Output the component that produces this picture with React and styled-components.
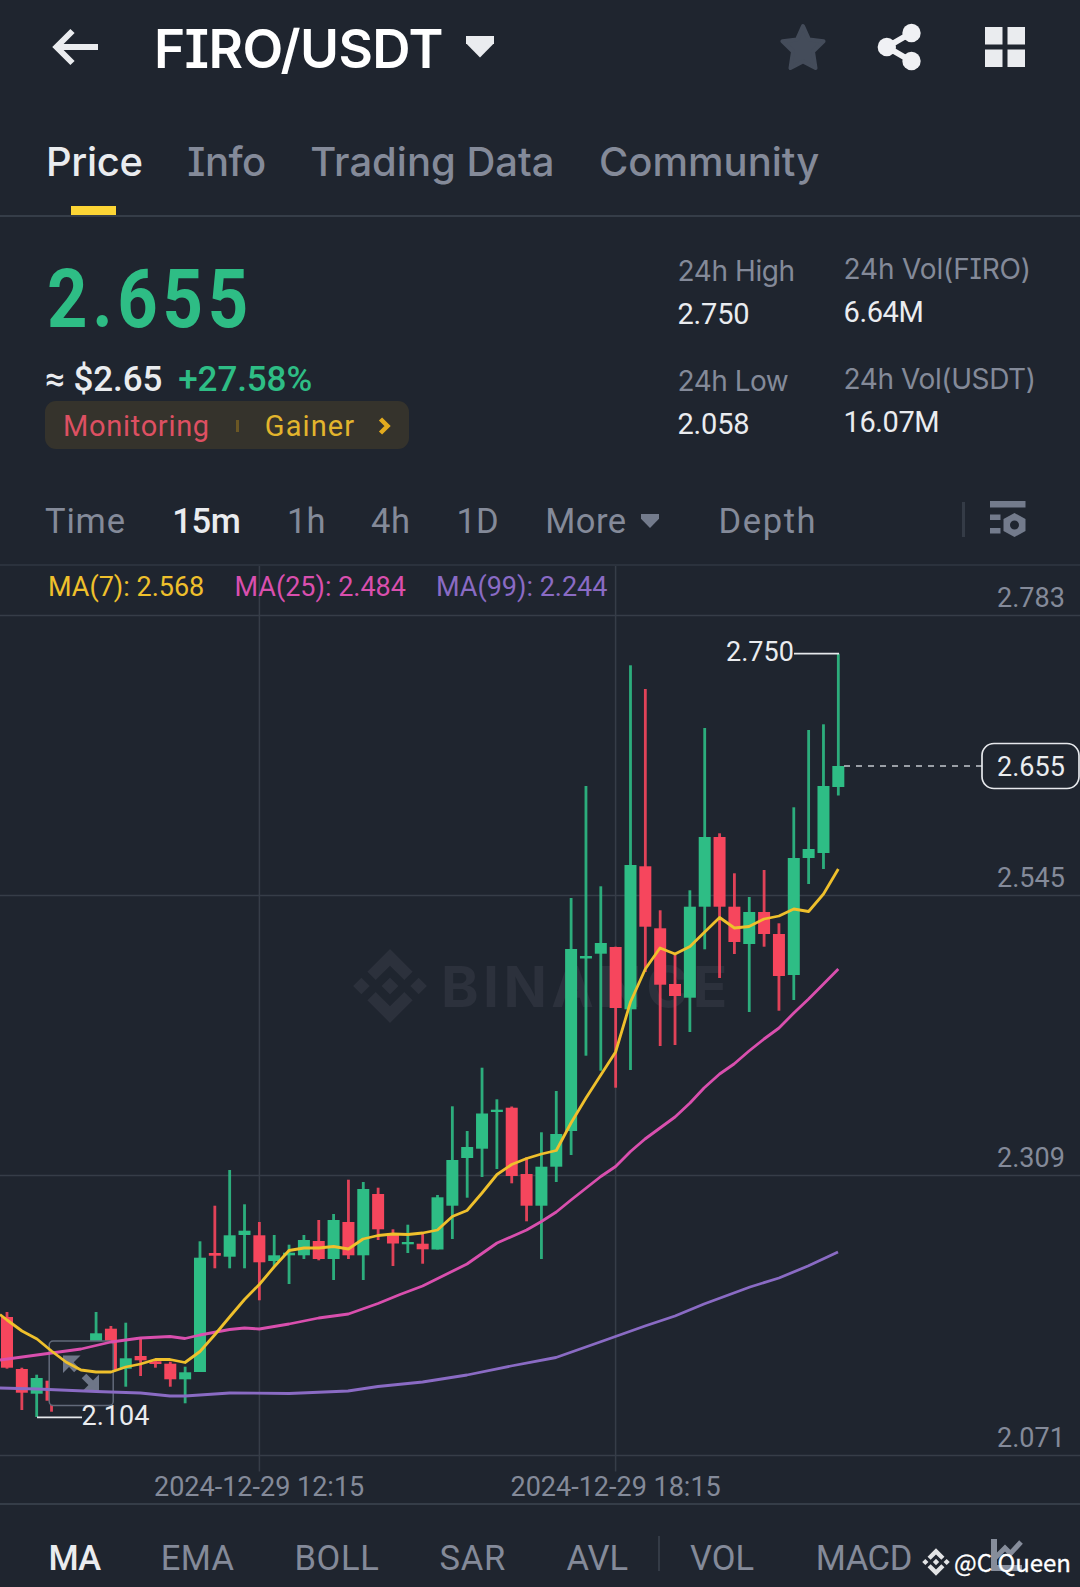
import React from "react";
import styled, { createGlobalStyle } from "styled-components";

const c = {
  bg: "#1f252f",
  text: "#eaecef",
  muted: "#848a99",
  line: "#353d48",
  grid: "#363d48",
  green: "#2ebd85",
  red: "#f6465d",
  yellow: "#efc02c",
  pink: "#d94fae",
  purple: "#8a6bc4",
};

const GlobalStyle = createGlobalStyle`
  body {
    margin: 0;
    background: ${c.bg};
    color: ${c.text};
    font-family: Roboto, "Liberation Sans", sans-serif;
  }
`;

const Screen = styled.main`
  position: relative;
  width: 1080px;
  height: 1587px;
  overflow: hidden;
  display: flex;
  flex-direction: column;
`;

/* ---------- header ---------- */
const Header = styled.header`
  height: 94px;
  box-sizing: border-box;
  padding: 0 55px 0 52px;
  display: flex;
  align-items: center;
`;

const Pair = styled.h1`
  margin: 4px 23px 0 56px;
  font: 600 53px/60px Inter, sans-serif;
  font-feature-settings: "cv08";
  letter-spacing: -0.6px;
  color: #fff;
`;

const Actions = styled.div`
  margin-left: auto;
  display: flex;
  align-items: center;
`;

const IconBox = styled.svg`
  display: block;
  flex: none;
  margin-left: ${(p) => p.$ml || 0}px;
`;

/* ---------- section tabs ---------- */
const Tabs = styled.nav`
  height: 78px;
  padding: 43px 0 0 46px;
  display: flex;
  gap: 44.5px;
  border-bottom: 2px solid ${c.line};
`;

const Tab = styled.div`
  display: flex;
  flex-direction: column;
  align-items: center;
  justify-content: space-between;
  font: 500 40px/50px Inter, sans-serif;
  font-feature-settings: "cv08";
  letter-spacing: ${(p) => p.$ls || 0}px;
  color: ${(p) => (p.$active ? c.text : c.muted)};

  &::after {
    content: "";
    width: 45px;
    height: 9px;
    margin-right: 1px;
    background: ${(p) => (p.$active ? "#fcd535" : "transparent")};
  }
`;

/* ---------- price summary ---------- */
const Summary = styled.section`
  height: 261px;
  display: flex;
`;

const Quote = styled.div`
  flex: none;
  width: 677.5px;
  padding: 37px 0 0 45px;
  box-sizing: border-box;
`;

const LastPrice = styled.div`
  width: max-content;
  margin-left: 2px;
  font-size: 82px;
  font-weight: 700;
  line-height: 90px;
  letter-spacing: 5.5px;
  color: ${c.green};
  transform: scaleX(0.86);
  transform-origin: left;
`;

const Converted = styled.div`
  margin-top: 14.5px;
  display: flex;
  gap: 16px;
  font-size: 35px;
  font-weight: 500;
  line-height: 42px;
  letter-spacing: -0.1px;
`;

const Change = styled.span`
  color: ${c.green};
`;

const Badge = styled.div`
  margin-top: 0.5px;
  width: 364px;
  height: 48px;
  box-sizing: border-box;
  padding: 2px 18px 0 18px;
  border-radius: 11px;
  background: #35332c;
  display: flex;
  align-items: center;
  font-size: 29px;
`;

const Tag = styled.span`
  color: ${(p) => p.$color};
  letter-spacing: ${(p) => p.$ls}px;
`;

const TagRule = styled.i`
  flex: none;
  width: 3px;
  height: 12px;
  margin: 0 26px 0 26px;
  background: #6b5724;
`;

const Stats = styled.dl`
  flex: none;
  margin: 0;
  padding-top: ${(p) => p.$top}px;
  width: 166px;
  white-space: nowrap;
`;

const StatLabel = styled.dt`
  font: 400 28px/42px Inter, sans-serif;
  font-feature-settings: "cv08";
  letter-spacing: ${(p) => p.$ls}px;
  color: ${c.muted};
`;

const StatValue = styled.dd`
  margin: 1px 0 24.5px;
  font-size: 29px;
  line-height: 42px;
  letter-spacing: ${(p) => p.$ls || 0}px;
`;

/* ---------- interval bar ---------- */
const Intervals = styled.nav`
  height: 86px;
  padding: 0 54px 0 45px;
  border-bottom: 2px solid #2b323d;
  display: flex;
  align-items: center;
  gap: 46.5px;
  font-size: 34.5px;
  line-height: 86px;
`;

const Option = styled.span`
  flex: none;
  display: flex;
  align-items: center;
  font-weight: ${(p) => (p.$active ? 500 : 400)};
  color: ${(p) => (p.$active ? c.text : c.muted)};
  letter-spacing: ${(p) => p.$ls || 0}px;
  margin-left: ${(p) => p.$ml || 0}px;
`;

const Rule = styled.i`
  flex: none;
  width: 3px;
  height: 35px;
  background: #343b46;
`;

const Tools = styled.div`
  margin: -4px 0 0 auto;
  display: flex;
  align-items: center;
  gap: 25px;
`;

/* ---------- chart ---------- */
const Chart = styled.svg`
  display: block;
  flex: none;
  font-family: Roboto, sans-serif;
  font-size: 27px;
`;

const ChartText = styled.text`
  fill: ${(p) => p.$color};
`;

const Brand = styled.text`
  font: 700 57px Inter, sans-serif;
  letter-spacing: 4.4px;
  fill: #2c313c;
`;

/* ---------- indicator bar ---------- */
const Indicators = styled.nav`
  height: 82px;
  box-sizing: border-box;
  padding: 24px 57px 0 48.5px;
  border-top: 2px solid ${c.line};
  display: flex;
  align-items: flex-start;
  gap: 60px;
  font-size: 34.5px;
  line-height: 58px;
`;

const IndicatorRule = styled(Rule)`
  width: 2px;
  margin: 7px -30px 0;
`;

const ChartToggle = styled.svg`
  flex: none;
  margin: 10px 0 0 auto;
`;

const Credit = styled.div`
  position: absolute;
  left: 922px;
  top: 1543px;
  display: flex;
  align-items: center;
  gap: 4px;
  font: 400 24px/38px "Noto Sans CJK SC", "Noto Sans", sans-serif;
  color: #fff;
  white-space: nowrap;
  -webkit-text-stroke: 0.3px #fff;
`;

const BrandMark = ({ x, y, size, fill }) => (
  <svg x={x} y={y} width={size} height={size} viewBox="0 0 24 24" fill={fill}>
    <path d="M7.42 10.09 12 5.52l4.58 4.58 2.66-2.67L12 .19 4.76 7.43zM.19 12l2.66-2.66L5.51 12l-2.66 2.66zM7.42 13.91 12 18.48l4.58-4.58 2.66 2.66L12 23.81l-7.24-7.24zM18.49 12l2.66-2.66L23.81 12l-2.66 2.66zM14.7 12 12 14.7 9.3 12 12 9.3z" />
  </svg>
);

const Caret = ({ w, h, fill, ml }) => (
  <IconBox $ml={ml} width={w} height={h} viewBox="0 0 28 22" preserveAspectRatio="none">
    <path d="M0 0H28V7.500L14 22L0 7.500Z" fill={fill} />
  </IconBox>
);

/* wick top, body top, body bottom, wick bottom, direction */
const candles = [
  [1312, 1317, 1367.7, 1368.7, 0], [1367.7, 1369, 1392.7, 1410, 0], [1374.7, 1378, 1393.7, 1417, 1],
  [1380.7, 1380.7, 1400.7, 1411.7, 0], null, null,
  [1312, 1333.3, 1353, 1353, 1], [1326, 1328.7, 1370, 1370, 0], [1322.7, 1358.3, 1368.7, 1386.7, 1],
  [1339, 1356, 1360.3, 1376, 0], [1360, 1361.3, 1364, 1367.7, 0], [1361.7, 1363.7, 1379.3, 1386.7, 0],
  [1366.7, 1372.3, 1379.3, 1403.3, 1], [1241.3, 1257.7, 1372, 1372, 1], [1205.7, 1253, 1255.7, 1268.3, 0],
  [1170, 1235.3, 1256.7, 1268.3, 1], [1204.3, 1230.7, 1235, 1268.3, 1], [1222, 1235.3, 1262.3, 1300.3, 0],
  [1235, 1255.3, 1261, 1266.7, 1], [1244.7, 1252.7, 1255.3, 1284, 1], [1235, 1240, 1255.3, 1259, 1],
  [1220, 1241, 1259, 1260.3, 0], [1214, 1220, 1259, 1280, 1], [1179.7, 1222, 1255.3, 1259, 0],
  [1182, 1189, 1255.3, 1280, 1], [1187.7, 1194, 1229.3, 1240, 0], [1229.3, 1233.3, 1243.5, 1266, 0],
  [1224.7, 1242, 1244.3, 1253, 1], [1233.3, 1243.7, 1249.3, 1263.7, 0], [1195, 1197.3, 1249.5, 1249.5, 1],
  [1106.3, 1160, 1205.7, 1239, 1], [1131, 1147, 1158, 1197.7, 1], [1067.7, 1113.5, 1148.7, 1177, 1],
  [1099.3, 1109.7, 1112, 1169, 1], [1106.5, 1107.7, 1176, 1183.3, 0], [1157.3, 1174, 1205.7, 1221.3, 0],
  [1132.3, 1166.7, 1205.7, 1259, 1], [1091, 1134, 1166.7, 1182, 1], [898, 949, 1131, 1155, 1],
  [786, 956, 958.5, 1055.7, 1], [886.3, 943, 953.7, 1070.7, 1], [946.7, 947, 1008, 1087.7, 0],
  [665.3, 865, 1009.3, 1070, 1], [689, 866.3, 926.7, 972, 0], [910.3, 928.3, 984.7, 1046, 0],
  [955, 984, 996, 1045, 0], [890.3, 906.7, 997.7, 1032, 1], [728, 837, 906.7, 949.3, 1],
  [833.3, 837, 906.7, 978, 0], [873.3, 906.7, 942, 954, 0], [897, 912, 944, 1012, 1],
  [870, 912, 934, 946.7, 0], [923.3, 934, 976, 1010.7, 0], [807.3, 858, 975, 1000, 1],
  [730, 849, 858, 884, 1], [724.3, 786, 853, 869, 1], [653.7, 766, 787, 795.5, 1],
];

const step = 14.845;
const ma7 =
  "0,1314.500 7,1320 22,1331 37,1339 51.500,1351 66,1362 81,1370 96,1372 111,1372 125.700,1367 140.600,1364 155.400,1359.500 170,1359.500 185,1362.500 200,1351.500 215,1334.500 229.600,1317 244.500,1299.500 259.300,1284.500 274,1267 289,1250.500 304,1248 318.700,1248 333.600,1246.500 348.400,1249 363,1239 378,1235.500 393,1234 408,1234.500 422.600,1233 437.500,1230 452.300,1216.500 467,1210.500 482,1193 497,1174.500 511.700,1164.500 526.600,1158.500 541.400,1154 556.300,1150.500 571,1123 586,1098 600.800,1075 615.600,1052 630.500,1002 645.300,969 660,948 675,954 690,946.500 704.700,932 719.600,917.500 734.400,928 749,926.500 764,919 779,916 793.800,909 808.600,911.500 823.500,894 838.300,869";
const ma25 =
  "0,1360 51.500,1353 81,1349 111,1342 140.600,1338 170,1336.500 185,1338.500 200,1335 229.600,1329.500 244.500,1328 259.300,1329 289,1324 318.700,1318 348.400,1314 378,1303.500 400,1294.500 422.600,1286 467,1264 497,1243 526.600,1230 541.400,1221.500 556.300,1212 571,1200 600.800,1176.500 615.600,1166.500 630.500,1151.500 645,1139 660,1128 675,1117 690,1103 704,1088 719.600,1074 734,1064 749,1051 764,1039 779,1028 793.800,1013 808.600,999 823.500,984 838.300,969";
const ma99 =
  "0,1388 37,1389 96,1391.500 140.600,1393 170,1396 185,1396 229.600,1393 289,1393.500 348,1391 378,1386.500 422.600,1382 467,1375 511,1366 556,1357.500 600,1342 645,1326 675,1316 704,1304 750,1287 779,1278 808,1266 838,1252";

const Candle = ({ x, data: [high, top, bottom, low, up] }) => (
  <g fill={up ? c.green : c.red}>
    <rect x={x - 1.4} y={high} width="2.8" height={low - high} opacity="0.9" />
    <rect x={x - 6} y={top} width="12" height={bottom - top} />
  </g>
);

const PriceChart = () => (
  <Chart width="1080" height="937" viewBox="0 566 1080 937">
    <g stroke={c.grid} strokeWidth="1.500">
      {[615.4, 895.4, 1175.4, 1455.4].map((y) => (
        <line key={y} x1="0" x2="1080" y1={y} y2={y} />
      ))}
      {[259.4, 615.6].map((x) => (
        <line key={x} x1={x} x2={x} y1="566" y2="1471.500" />
      ))}
    </g>

    <BrandMark x={352.500} y={948.500} size={75} fill="#2c313c" />
    <Brand x="441" y="1006.700">BINANCE</Brand>

    {candles.map((d, i) => d && <Candle key={i} x={7 + i * step} data={d} />)}

    <rect x="49.200" y="1341" width="64" height="64.500" rx="4" fill={c.bg} stroke="#626a7a" strokeWidth="1.500" />
    <g fill="#6e7688" stroke="#6e7688" strokeWidth="6.500">
      <path d="M63 1355.500H80.500L63 1373Z" stroke="none" />
      <path d="M67 1360L76.500 1370" />
      <path d="M99 1391.500H82L99 1374.500Z" stroke="none" />
      <path d="M84 1376L94 1386" />
    </g>

    <g fill="none" strokeWidth="2.800" strokeLinejoin="round">
      <polyline points={ma99} stroke={c.purple} />
      <polyline points={ma25} stroke={c.pink} />
      <polyline points={ma7} stroke={c.yellow} />
    </g>

    <g stroke="#e6e8ec" strokeWidth="1.700" fill="none">
      <path d="M794 653.700H839M37 1417.300H82" />
      <path d="M844 766H982" strokeDasharray="6 6" stroke="#c4c8ce" />
      <rect x="982" y="743.500" width="97" height="45" rx="12" fill={c.bg} />
    </g>

    <ChartText x="726" y="661.300" $color={c.text}>2.750</ChartText>
    <ChartText x="81.500" y="1425" $color={c.text}>2.104</ChartText>
    <ChartText x="997" y="776" $color={c.text}>2.655</ChartText>
    <ChartText x="997" y="606.700" $color={c.muted}>2.783</ChartText>
    <ChartText x="997" y="886.700" $color={c.muted}>2.545</ChartText>
    <ChartText x="997" y="1166.700" $color={c.muted}>2.309</ChartText>
    <ChartText x="997" y="1446.700" $color={c.muted}>2.071</ChartText>
    <ChartText x="154" y="1496" $color={c.muted}>2024-12-29 12:15</ChartText>
    <ChartText x="510.500" y="1496" $color={c.muted}>2024-12-29 18:15</ChartText>
    <ChartText x="48" y="596" $color={c.yellow}>MA(7): 2.568</ChartText>
    <ChartText x="234.500" y="596" $color={c.pink}>MA(25): 2.484</ChartText>
    <ChartText x="436" y="596" $color={c.purple}>MA(99): 2.244</ChartText>
  </Chart>
);

export default function App() {
  return (
    <Screen>
      <GlobalStyle />
      <Header>
        <IconBox width="46" height="38" viewBox="0 0 46 38">
          <path d="M46 19H5M20.500 3L4.500 19L20.500 35" fill="none" stroke={c.text} strokeWidth="6" />
        </IconBox>
        <Pair>FIRO/USDT</Pair>
        <Caret w={28} h={21.5} fill={c.text} />
        <Actions>
          <IconBox width="46" height="48" viewBox="0 0 46 48">
            <path
              d="M23 3L29 16.500L43.500 18.200L33 28.500L35.500 45L23 38.500L10.500 45L13 28.500L2.500 18.200L17 16.500Z"
              fill="#444c5a" stroke="#444c5a" strokeWidth="4" strokeLinejoin="round"
            />
          </IconBox>
          <IconBox $ml={51} width="44" height="48" viewBox="0 0 44 48">
            <path d="M34 10L10 24L34 38" fill="none" stroke="#f0f1f4" strokeWidth="6" />
            <circle cx="9.800" cy="24" r="9.200" fill="#f0f1f4" />
            <circle cx="34.500" cy="10" r="9.200" fill="#f0f1f4" />
            <circle cx="34.500" cy="38" r="9.200" fill="#f0f1f4" />
          </IconBox>
          <IconBox $ml={64.500} width="40" height="40" viewBox="0 0 40 40">
            <path d="M0 0H17.500V17.500H0ZM22.500 0H40V17.500H22.500ZM0 22.500H17.500V40H0ZM22.500 22.500H40V40H22.500Z" fill={c.text} />
          </IconBox>
        </Actions>
      </Header>

      <Tabs>
        <Tab $active $ls={-0.3}>Price</Tab>
        <Tab $ls={-0.5}>Info</Tab>
        <Tab>Trading Data</Tab>
        <Tab>Community</Tab>
      </Tabs>

      <Summary>
        <Quote>
          <LastPrice>2.655</LastPrice>
          <Converted>
            <span>≈ $2.65</span>
            <Change>+27.58%</Change>
          </Converted>
          <Badge>
            <Tag $color="#dd5062" $ls={0.7}>Monitoring</Tag>
            <TagRule />
            <Tag $color="#e3b52d" $ls={1.1}>Gainer</Tag>
            <IconBox $ml={23} width="13" height="18" viewBox="0 0 13 18">
              <path d="M2.500 2L9.500 9L2.500 16" fill="none" stroke="#e3ab1e" strokeWidth="4.500" />
            </IconBox>
          </Badge>
        </Quote>
        <Stats $top={33}>
          <StatLabel $ls={-0.4}>24h High</StatLabel>
          <StatValue $ls={-0.2}>2.750</StatValue>
          <StatLabel $ls={-0.5}>24h Low</StatLabel>
          <StatValue $ls={-0.2}>2.058</StatValue>
        </Stats>
        <Stats $top={31.2}>
          <StatLabel $ls={-0.15}>24h Vol(FIRO)</StatLabel>
          <StatValue $ls={-0.4}>6.64M</StatValue>
          <StatLabel $ls={-0.4}>24h Vol(USDT)</StatLabel>
          <StatValue $ls={-0.4}>16.07M</StatValue>
        </Stats>
      </Summary>

      <Intervals>
        <Option $ls={0.8}>Time</Option>
        <Option $active $ls={-0.3}>15m</Option>
        <Option>1h</Option>
        <Option $ls={0.6} $ml={-1}>4h</Option>
        <Option $ml={-0.5}>1D</Option>
        <Option $ls={0.5}>
          More
          <Caret w={18} h={14} fill="#737b8c" ml={14} />
        </Option>
        <Option $ls={1.6} $ml={13.5}>Depth</Option>
        <Tools>
          <Rule />
          <IconBox width="36" height="36" viewBox="0 0 36 36">
            <path
              d="M0 0H35.500V6.500H0ZM0 13.500H10.500V19H0ZM0 27H10.500V32.500H0ZM24.500 12L35.500 18V30L24.500 36L13.500 30V18ZM24.500 19.500A4.500 4.500 0 1 0 24.500 28.500A4.500 4.500 0 1 0 24.500 19.500Z"
              fill="#737b8c" fillRule="evenodd"
            />
          </IconBox>
        </Tools>
      </Intervals>

      <PriceChart />

      <Indicators>
        <Option $active $ls={-0.6}>MA</Option>
        <Option $ls={0.4}>EMA</Option>
        <Option $ls={0.7}>BOLL</Option>
        <Option $ls={0.7}>SAR</Option>
        <Option $ml={0.5}>AVL</Option>
        <IndicatorRule />
        <Option>VOL</Option>
        <Option $ls={-0.4} $ml={1.5}>MACD</Option>
        <ChartToggle width="32" height="32" viewBox="0 0 32 32" fill="none" stroke="#868d9b">
          <path d="M3 0V29H31" strokeWidth="6" />
          <path d="M4 19L14 9L19.500 14.500L30 3" strokeWidth="5" />
        </ChartToggle>
      </Indicators>

      <Credit>
        <BrandMark size={28} fill="#e2e3e5" />
        <span>@C Queen</span>
      </Credit>
    </Screen>
  );
}
